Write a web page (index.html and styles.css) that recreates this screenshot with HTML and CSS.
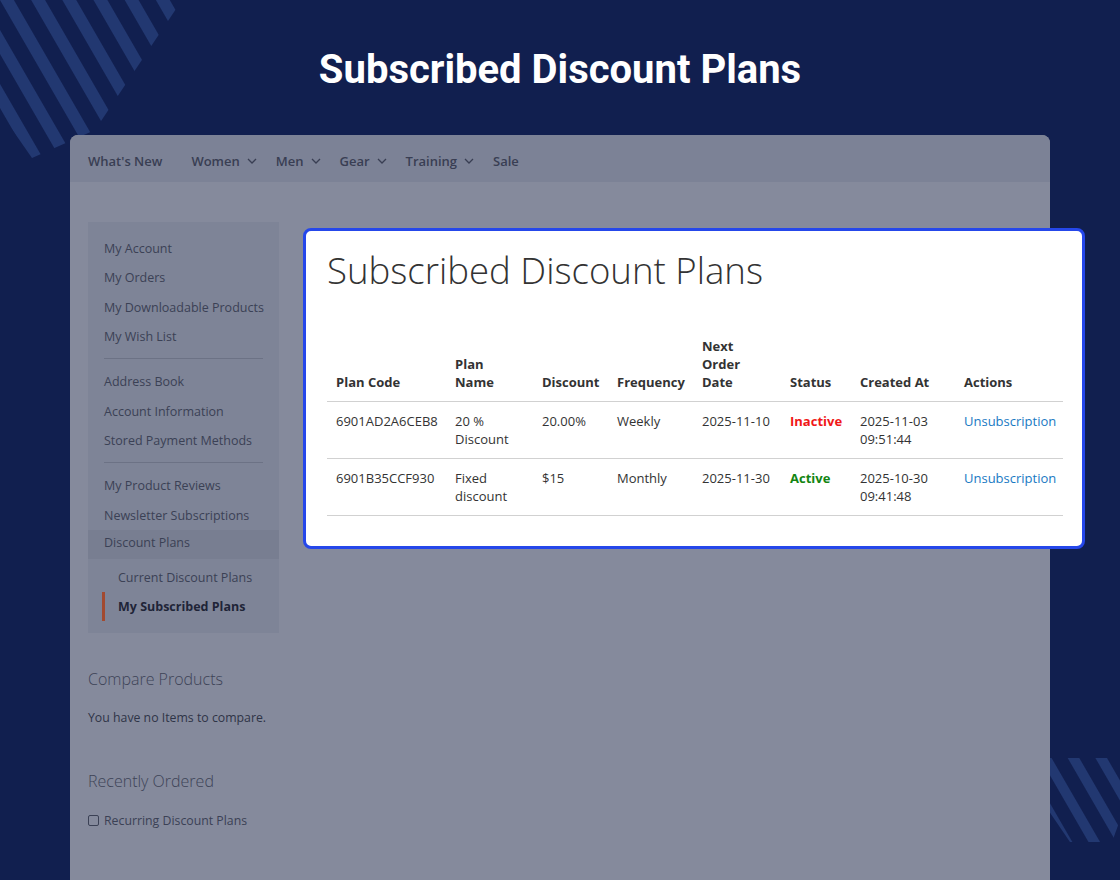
FILE: index.html
```html
<!DOCTYPE html>
<html lang="en">
<head>
    <meta charset="UTF-8">
    <meta name="viewport" content="width=device-width, initial-scale=1.0">
    <title>Subscribed Discount Plans</title>
    <link rel="stylesheet" href="styles.css">
</head>
<body>
    <div class="stage">
        <svg class="stripes stripes-tl" width="200" height="170" viewBox="0 0 200 170">
            <defs>
                <pattern id="stripeTL" width="27" height="40" patternUnits="userSpaceOnUse" patternTransform="rotate(-30)">
                    <rect width="12" height="40" fill="#223871"/>
                </pattern>
            </defs>
            <polygon points="0,0 182,0 95,130 32,158 0,112" fill="url(#stripeTL)"/>
        </svg>
        <svg class="stripes stripes-br" width="80" height="90" viewBox="0 0 80 90">
            <defs>
                <pattern id="stripeBR" width="24" height="40" patternUnits="userSpaceOnUse" patternTransform="rotate(-30)">
                    <rect width="10" height="40" fill="#223871"/>
                </pattern>
            </defs>
            <polygon points="0,0 80,0 80,62 72,84 30,84 0,40" fill="url(#stripeBR)"/>
        </svg>

        <h1 class="page-title">Subscribed Discount Plans</h1>

        <div class="shot">
            <nav class="topnav">
                <span class="nav-item first">What's New</span>
                <span class="nav-item">Women <svg width="10" height="6" viewBox="0 0 10 6"><path d="M1 1l4 4 4-4" fill="none" stroke="currentColor" stroke-width="1.3"/></svg></span>
                <span class="nav-item">Men <svg width="10" height="6" viewBox="0 0 10 6"><path d="M1 1l4 4 4-4" fill="none" stroke="currentColor" stroke-width="1.3"/></svg></span>
                <span class="nav-item">Gear <svg width="10" height="6" viewBox="0 0 10 6"><path d="M1 1l4 4 4-4" fill="none" stroke="currentColor" stroke-width="1.3"/></svg></span>
                <span class="nav-item">Training <svg width="10" height="6" viewBox="0 0 10 6"><path d="M1 1l4 4 4-4" fill="none" stroke="currentColor" stroke-width="1.3"/></svg></span>
                <span class="nav-item">Sale</span>
            </nav>

            <div class="shot-body">
                <aside class="sidebar">
                    <ul class="account-nav">
                        <li>My Account</li>
                        <li>My Orders</li>
                        <li>My Downloadable Products</li>
                        <li>My Wish List</li>
                        <li class="sep"></li>
                        <li>Address Book</li>
                        <li>Account Information</li>
                        <li>Stored Payment Methods</li>
                        <li class="sep"></li>
                        <li>My Product Reviews</li>
                        <li>Newsletter Subscriptions</li>
                        <li class="open">Discount Plans</li>
                        <li class="sub-list">
                            <ul>
                                <li>Current Discount Plans</li>
                                <li class="current">My Subscribed Plans</li>
                            </ul>
                        </li>
                    </ul>

                    <div class="block">
                        <div class="block-title">Compare Products</div>
                        <p class="block-text">You have no Items to compare.</p>
                    </div>

                    <div class="block block-recent">
                        <div class="block-title">Recently Ordered</div>
                        <label class="check-row"><span class="checkbox"></span>Recurring Discount Plans</label>
                    </div>
                </aside>
            </div>
        </div>

        <section class="card">
            <h2 class="card-title">Subscribed Discount Plans</h2>
            <table class="plans">
                <thead>
                    <tr>
                        <th class="col-code">Plan Code</th>
                        <th class="col-name">Plan<br>Name</th>
                        <th class="col-discount">Discount</th>
                        <th class="col-freq">Frequency</th>
                        <th class="col-next">Next<br>Order<br>Date</th>
                        <th class="col-status">Status</th>
                        <th class="col-created">Created At</th>
                        <th class="col-actions">Actions</th>
                    </tr>
                </thead>
                <tbody>
                    <tr>
                        <td>6901AD2A6CEB8</td>
                        <td>20 %<br>Discount</td>
                        <td>20.00%</td>
                        <td>Weekly</td>
                        <td>2025-11-10</td>
                        <td><span class="status inactive">Inactive</span></td>
                        <td>2025-11-03<br>09:51:44</td>
                        <td><a href="#" class="action-link">Unsubscription</a></td>
                    </tr>
                    <tr>
                        <td>6901B35CCF930</td>
                        <td>Fixed<br>discount</td>
                        <td>$15</td>
                        <td>Monthly</td>
                        <td>2025-11-30</td>
                        <td><span class="status active">Active</span></td>
                        <td>2025-10-30<br>09:41:48</td>
                        <td><a href="#" class="action-link">Unsubscription</a></td>
                    </tr>
                </tbody>
            </table>
        </section>
    </div>
</body>
</html>
```

FILE: styles.css
```css
body {
    margin: 0;
    padding: 0;
    background-color: #111f4f;
    font-family: "Open Sans", "Liberation Sans", sans-serif;
    overflow: hidden;
}

.stage {
    position: relative;
    width: 1120px;
    height: 880px;
    overflow: hidden;
}

.stripes {
    position: absolute;
    display: block;
}

.stripes-tl {
    left: 0;
    top: 0;
}

.stripes-br {
    left: 1040px;
    top: 758px;
}

.page-title {
    position: relative;
    margin: 0;
    padding-top: 48px;
    height: 44px;
    line-height: 44px;
    text-align: center;
    color: #fff;
    font-family: Roboto, "Liberation Sans", sans-serif;
    font-weight: 700;
    font-size: 40px;
}

/* dimmed storefront screenshot */
.shot {
    position: relative;
    z-index: 1;
    margin: 43px 0 0 70px;
    width: 980px;
    height: 760px;
    background-color: #858a9c;
    border-radius: 8px 8px 0 0;
    overflow: hidden;
    color: #3b4155;
}

.topnav {
    display: flex;
    align-items: center;
    height: 43px;
    padding: 4px 0 0 18px;
    background-color: #7c8296;
    font-size: 13px;
    font-weight: 600;
    color: #393e53;
}

.nav-item {
    display: flex;
    align-items: center;
    gap: 7px;
    margin-right: 19px;
}

.nav-item.first {
    margin-right: 29px;
}

.shot-body {
    padding: 40px 18px 0;
}

.sidebar {
    width: 191px;
}

.account-nav {
    list-style: none;
    margin: 0;
    padding: 12px 0;
    background-color: #7e8497;
    font-size: 12.5px;
    white-space: nowrap;
}

.account-nav li {
    padding: 5px 16px;
    line-height: 19.33px;
}

.account-nav li.sep {
    padding: 0;
    margin: 7px 16px 8px;
    border-top: 1px solid #6c7285;
}

.account-nav li.open {
    height: 26px;
    padding-top: 3px;
    padding-bottom: 0;
    line-height: 20px;
    background-color: #787e91;
}

.account-nav li.sub-list {
    padding: 4px 0 0;
}

.account-nav li.sub-list ul {
    list-style: none;
    margin: 0;
    padding: 0;
}

.account-nav li.sub-list li {
    padding: 5px 16px 5px 30px;
    line-height: 19px;
}

.account-nav li.sub-list li.current {
    margin-left: 14px;
    padding-left: 13px;
    border-left: 3px solid #a24a30;
    font-weight: 700;
    color: #1f2437;
}

.block {
    margin-top: 36px;
}

.block.block-recent {
    margin-top: 44px;
}

.block-title {
    font-size: 16px;
    font-weight: 300;
    line-height: 20px;
    color: #3d4357;
}

.block-text {
    margin: 20px 0 0;
    font-size: 12.3px;
    line-height: 18px;
    color: #2f3447;
}

.check-row {
    display: flex;
    align-items: center;
    gap: 5px;
    margin-top: 21px;
    font-size: 12.3px;
    line-height: 18px;
}

.checkbox {
    width: 9px;
    height: 9px;
    border: 1px solid #3b4155;
    border-radius: 2px;
}

/* highlighted card */
.card {
    position: absolute;
    z-index: 2;
    left: 303px;
    top: 228px;
    width: 782px;
    height: 321px;
    box-sizing: border-box;
    padding: 19px 19px 28px 21px;
    background-color: #fff;
    border: 3px solid #2547ea;
    border-radius: 8px;
    color: #333;
}

.card-title {
    margin: 0;
    font-size: 36.6px;
    font-weight: 300;
    line-height: 40px;
    color: #333;
}

.plans {
    width: 100%;
    margin-top: 37px;
    border-collapse: collapse;
    table-layout: fixed;
    font-size: 13px;
    line-height: 18px;
}

.plans th {
    padding: 10px 9px;
    text-align: left;
    vertical-align: bottom;
    font-weight: 700;
    border-bottom: 1px solid #d1d1d1;
}

.plans td {
    padding: 10px 9px;
    vertical-align: top;
    border-bottom: 1px solid #d1d1d1;
}

/* column widths are content widths, padding comes on top */
.col-code { width: 101px; }
.col-name { width: 69px; }
.col-discount { width: 57px; }
.col-freq { width: 67px; }
.col-next { width: 70px; }
.col-status { width: 52px; }
.col-created { width: 86px; }
.col-actions { width: 90px; }

.status {
    font-weight: 700;
}

.status.inactive {
    color: #f01818;
}

.status.active {
    color: #128512;
}

.action-link {
    color: #1979c3;
    text-decoration: none;
}
```
